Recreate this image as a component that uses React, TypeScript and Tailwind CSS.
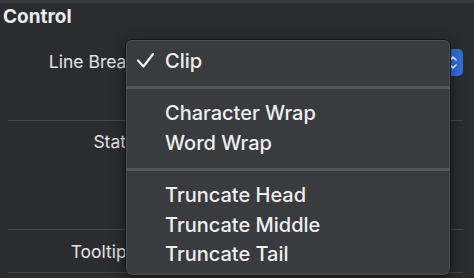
import React from 'react';

const Check: React.FC = () => (
  <svg width="17" height="15" viewBox="0 0 17 15" fill="none">
    <path d="M1 7.5 L6.5 13.5 L16 1" stroke="#f2f2f2" strokeWidth="2.2" strokeLinecap="round" strokeLinejoin="round" />
  </svg>
);

const Item: React.FC<{ label: string; checked?: boolean }> = ({ label, checked }) => (
  <div className="flex items-center h-[29.5px]">
    <span className="w-[28px] flex items-center">{checked && <Check />}</span>
    <span>{label}</span>
  </div>
);

const Sep: React.FC = () => <div className="h-[3px] bg-[#535558] my-[10px]" />;

const App: React.FC = () => {
  return (
    <div
      className="relative w-[474px] h-[278px] overflow-hidden bg-[#2b2c2f] text-[#e4e4e4]"
      style={{ fontFamily: 'Inter, "Liberation Sans", sans-serif' }}
    >
      <div className="h-[3px] bg-[#3a3b3e]" />
      <div className="h-[28px] flex items-center pl-[3px] text-[19px] font-bold text-[#ececec]">Control</div>

      <div className="h-[89px] pt-[17px]">
        <div className="flex items-center h-[28px]">
          <div className="w-[136px] text-right text-[17.5px]">Line Break</div>
          <div className="ml-auto mr-[11px] w-[20px] h-[27px] rounded-[5px] bg-[#2f6fdf] flex items-center justify-center">
            <svg width="8" height="15" viewBox="0 0 8 15" fill="none">
              <path d="M1 5 L4 2 L7 5" stroke="#fff" strokeWidth="1.6" strokeLinecap="round" strokeLinejoin="round" />
              <path d="M1 10 L4 13 L7 10" stroke="#fff" strokeWidth="1.6" strokeLinecap="round" strokeLinejoin="round" />
            </svg>
          </div>
        </div>
      </div>
      <div className="h-px bg-[#444548] ml-[8px] mr-[11px]" />

      <div className="h-[108px] pt-[7px]">
        <div className="flex items-center h-[28px]">
          <div className="w-[136px] text-right text-[17.5px]">State</div>
        </div>
      </div>
      <div className="h-px bg-[#444548] ml-[8px] mr-[11px]" />

      <div className="h-[42px] pt-[8px]">
        <div className="flex items-center h-[28px]">
          <div className="w-[136px] text-right text-[17.5px]">Tooltips</div>
        </div>
      </div>
      <div className="h-px bg-[#444548] ml-[8px] mr-[11px]" />

      <div className="absolute left-[125px] top-[39px] w-[326px] h-[237px] rounded-[7px] bg-[#3a3b3e] border border-[#151617] shadow-[inset_0_0_0_1px_rgba(255,255,255,0.1),0_4px_14px_rgba(0,0,0,0.45)] pt-[6px] pl-[11px] text-[20px] font-medium text-[#efefef]">
        <Item label="Clip" checked />
        <div className="-ml-[11px]">
          <Sep />
        </div>
        <Item label="Character Wrap" />
        <Item label="Word Wrap" />
        <div className="-ml-[11px]">
          <Sep />
        </div>
        <Item label="Truncate Head" />
        <Item label="Truncate Middle" />
        <Item label="Truncate Tail" />
      </div>
    </div>
  );
};

export default App;
